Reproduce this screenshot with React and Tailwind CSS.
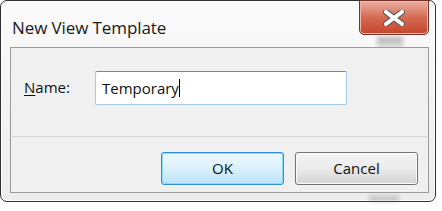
import React from "react";

function CloseGlyph() {
  return (
    <svg width="22" height="16" viewBox="0 0 22 16">
      <path
        d="M3 2 L19 14 M19 2 L3 14"
        stroke="#5a5a5a"
        strokeWidth="6"
        strokeLinecap="round"
        fill="none"
      />
      <path
        d="M3 2 L19 14 M19 2 L3 14"
        stroke="#ffffff"
        strokeWidth="4"
        strokeLinecap="round"
        fill="none"
      />
    </svg>
  );
}

export default function App() {
  return (
    <div
      className="w-[442px] h-[211px] bg-white overflow-hidden"
      style={{ fontFamily: '"Open Sans", "Noto Sans", sans-serif' }}
    >
      <div className="relative w-[436px] h-[202px] border border-[#2f2f2f] rounded-[7px] bg-gradient-to-b from-[#fbfbfb] via-[#f3f3f3] to-[#ececec] flex flex-col shadow-[inset_0_0_0_1px_#ffffff]">
        {/* Title bar */}
        <div className="h-[46px] flex items-center pl-[11px] pt-[8px]">
          <span className="text-[17px] text-[#1a1a1a] tracking-[-0.1px]">New View Template</span>
        </div>

        {/* Close button */}
        <div className="absolute top-[-1px] right-[6px] w-[70px] h-[35px] rounded-b-[5px] border border-[#7a3328] bg-gradient-to-b from-[#eab0a4] via-[#d46a52] to-[#c4462c] shadow-[inset_0_0_0_1px_#f0b7aa] flex items-center justify-center">
          <CloseGlyph />
        </div>
        {/* glass reflection under close button */}
        <div className="absolute top-[36px] left-[376px] w-[26px] h-[14px] bg-gradient-to-b from-[#8a8a8a] to-transparent opacity-70 blur-[2px]" />
        <div className="absolute bottom-[0px] left-[368px] w-[30px] h-[8px] bg-gradient-to-t from-[#8a8a8a] to-transparent opacity-60 blur-[2px]" />

        {/* Client area */}
        <div className="relative ml-[9px] mr-[6px] flex-1 mb-[8px] border border-[#9a9a9a] bg-[#f0f0f0] flex flex-col">
          <div className="mt-[23px] flex items-center h-[34px]">
            <span className="ml-[13px] w-[71px] text-[15px] text-[#111] pb-[1px]">
              <span className="underline underline-offset-[2px]">N</span>ame:
            </span>
            <div className="w-[252px] h-[34px] border border-[#a7cae6] border-t-[#5e8ebd] rounded-[2px] bg-white flex items-center pl-[6px]">
              <span className="text-[15px] text-[#111]">Temporary</span>
              <span className="w-[1px] h-[18px] bg-black ml-[0px]" />
            </div>
          </div>

          <div className="mt-[31px] h-[1px] bg-[#d5d5d5] mx-[1px]" />

          <div className="mt-[15px] flex justify-end gap-[11px] pr-[10px]">
            <button className="w-[123px] h-[33px] rounded-[3px] border border-[#2f8fd6] bg-gradient-to-b from-[#ecf7fd] via-[#dcf1fc] to-[#b9e2f8] shadow-[inset_0_0_0_1px_#8ad9f8] text-[15px] text-[#111]">
              OK
            </button>
            <button className="w-[123px] h-[33px] rounded-[3px] border border-[#737373] bg-gradient-to-b from-[#f3f3f3] via-[#ebebeb] to-[#d3d3d3] shadow-[inset_0_0_0_1px_#fcfcfc] text-[15px] text-[#111]">
              Cancel
            </button>
          </div>
        </div>
      </div>
    </div>
  );
}
